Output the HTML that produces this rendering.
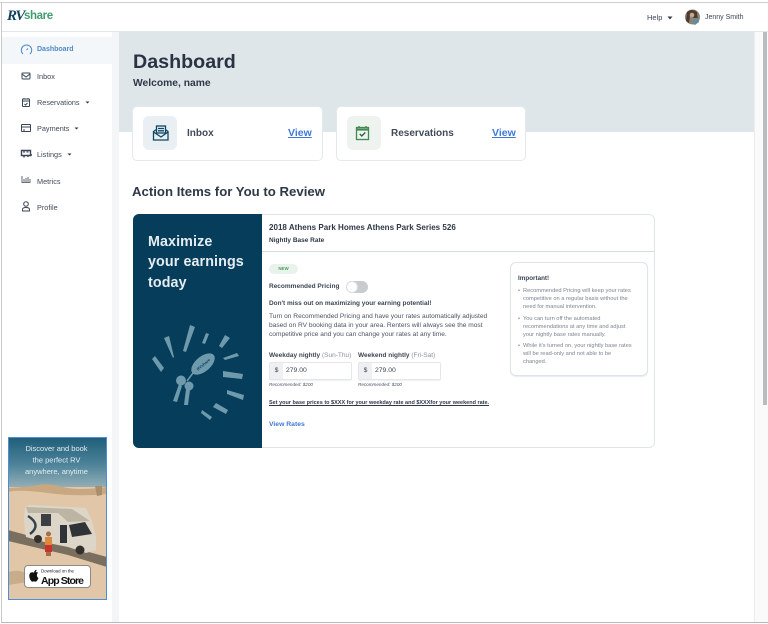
<!DOCTYPE html>
<html><head><meta charset="utf-8"><style>
*{box-sizing:border-box;margin:0;padding:0}
html,body{width:768px;height:624px;overflow:hidden;background:#fff;font-family:"Liberation Sans",sans-serif;color:#2b3444}
.a{position:absolute;white-space:nowrap}
#p{position:relative;width:768px;height:624px;overflow:hidden;filter:blur(.3px)}
.nav{font-size:7.3px;color:#3f4a5a;left:37px}
.card{position:absolute;background:#fff;border:1px solid #e3e9ed;border-radius:5px;top:106px;height:55px}
.ib{position:absolute;left:10px;top:9px;width:34px;height:34px;border-radius:6px}
.v{color:#3f78d8;font-weight:bold;font-size:10.5px;text-decoration:underline}
.t{font-size:6.6px;color:#4a5462;line-height:9.1px}
.i{font-size:5.7px;color:#7c8590;line-height:8.1px}
.inp{position:absolute;top:362px;height:18px;width:83px;border:1px solid #e4e7ea;border-radius:2px;background:#fff;box-shadow:0 1px 1px #eef0f2;font-size:6.8px;color:#3c4653;line-height:16px}
.inp b{display:inline-block;width:13px;height:16px;background:#eef0f2;text-align:center;font-weight:normal;margin-right:3px}
</style></head><body><div id="p">

<div class="a" style="left:0;top:2px;width:768px;height:1px;background:#cfcfcf"></div>
<div class="a" style="left:1px;top:3px;width:1px;height:619px;background:#c9c9c9"></div>
<div class="a" style="left:1px;top:622px;width:767px;height:1px;background:#b9b9b9"></div>

<!-- header -->
<div class="a" style="left:2px;top:31px;width:766px;height:1px;background:#e3e6e8"></div>
<div class="a" style="left:7px;top:8px;font:italic bold 15px 'Liberation Serif',serif;color:#12405f;letter-spacing:-1.4px">RV</div>
<div class="a" style="left:24px;top:9.5px;font-size:11.5px;font-weight:bold;color:#3f9e6d;letter-spacing:-.4px">share</div>
<div class="a" style="left:647px;top:13px;font-size:7.5px;color:#3c4656">Help</div>
<svg class="a" style="left:667px;top:16px" width="6" height="4"><path d="M.5 .5h5L3 3.500z" fill="#333c4a"/></svg>
<svg class="a" style="left:685px;top:9px" width="15" height="16"><circle cx="7.500" cy="8" r="7.500" fill="#8b8278"/><path d="M2 3Q7-1 12 3L13 13 9 15 8 7 5 7 4 14 1 12z" fill="#4f3b2e"/><path d="M8 9h5l1 4-4 3-2-1z" fill="#6c8a94"/><circle cx="7" cy="6" r="2.300" fill="#c8a48c"/></svg>
<div class="a" style="left:705px;top:13.500px;font-size:7px;color:#3c4656">Jenny Smith</div>

<!-- sidebar -->
<div class="a" style="left:2px;top:32px;width:110px;height:590px;background:#fff"></div>
<div class="a" style="left:112px;top:32px;width:7px;height:590px;background:#f4f5f6"></div>
<div class="a" style="left:2px;top:37px;width:110px;height:27px;background:#f4f7f9"></div>
<div class="a nav" style="top:46px;color:#4f8ac9;font-weight:bold;font-size:7px">Dashboard</div>
<div class="a nav" style="top:72px">Inbox</div>
<div class="a nav" style="top:98px">Reservations</div>
<div class="a nav" style="top:124px">Payments</div>
<div class="a nav" style="top:150px">Listings</div>
<div class="a nav" style="top:177px">Metrics</div>
<div class="a nav" style="top:203px">Profile</div>
<svg class="a" style="left:0;top:36px" width="112" height="180" fill="none" stroke="#3a4656" stroke-width="1">
<path d="M23 18a5.200 5.200 0 1 1 7 0M26.500 14l1.500-1.500" stroke="#4f8ac9"/>
<rect x="22" y="37" width="8" height="6" rx=".7"/><path d="M22 38l4 3 4-3"/>
<rect x="22.500" y="63" width="7" height="7.500" rx=".5"/><path d="M22.500 65h7M24 62v1.500M28 62v1.500M24.500 68l1 1 2-2"/>
<rect x="21.500" y="88.500" width="9" height="7" rx=".5"/><path d="M21.500 91h9M23 94h2"/>
<path d="M21.500 114.500h9v5h-9zM24 120v1.500M28 120v1M31 119h1" stroke-width="1.400"/><path d="M23 116h2M26.500 116h2"/>
<path d="M22 140v6.500h8.500M24 146v-3M26 146v-4M28 146v-5M30 146v-3" stroke-width=".8"/>
<circle cx="26" cy="168" r="2.300"/><path d="M22.500 175v-1.500q0-2 3.500-2t3.500 2v1.500z"/>
</svg>
<svg class="a" style="left:0;top:98px" width="112" height="60" fill="#2b3444"><path d="M85.500 3.500h4l-2 2zM74.500 29.500h4l-2 2zM67.500 55.500h4l-2 2z"/></svg>

<!-- ad -->
<svg class="a" style="left:8px;top:437px" width="99" height="163" viewBox="0 0 99 163">
<defs><linearGradient id="s" x1="0" y1="0" x2="0" y2="1"><stop offset="0" stop-color="#1f5d78"/><stop offset=".55" stop-color="#4d839a"/><stop offset="1" stop-color="#93aeb6"/></linearGradient></defs>
<rect width="99" height="163" fill="#e1c7a8"/>
<rect width="99" height="50" fill="url(#s)"/>
<path d="M0 51Q20 50 30 48T55 50 99 50V57Q70 60 40 56T0 55z" fill="#c9a781"/>
<path d="M87 49l7 0 0 9-5 1z" fill="#a98e6b"/>
<path d="M0 93L99 120V130L60 118 0 104z" fill="#7a6e5e"/>
<path d="M17 71Q18 68 24 68L78 71 84 84 88 100 88 113 78 116 60 110 40 106 18 100Q15 85 17 71z" fill="#ddd6c8"/>
<path d="M18 70L64 72 82 84 60 85 50 76 20 76z" fill="#bdb5a4"/>
<path d="M20 79Q34 88 22 97" stroke="#34424f" stroke-width="2.500" fill="none"/>
<rect x="33" y="77" width="10" height="12" fill="#3b3f43"/>
<path d="M61 88L77 85 84 97 64 100z" fill="#2f3338"/>
<rect x="52" y="88" width="7" height="18" fill="#2f3338"/>
<circle cx="30" cy="102" r="4" fill="#33302c"/><circle cx="72" cy="113" r="4.500" fill="#33302c"/>
<rect x="37" y="100" width="7" height="8" fill="#dc8a3a"/><rect x="37" y="108" width="7" height="7" fill="#c8342b"/><rect x="38" y="115" width="5" height="4" fill="#a56d48"/><circle cx="40.500" cy="97" r="2.500" fill="#a56d48"/>
<path d="M0 135Q10 132 18 136T20 145L0 148z" fill="#c9ad8a"/>
<rect x="16.500" y="128.500" width="66" height="22" rx="3.500" fill="#fff" stroke="#8a8a8a"/>
<path d="M30 135.500c-1-.6-3-.6-4 .2-1-.8-3-.6-4 .5-1.500 2-.5 6 1.500 8 1 .9 1.500 .2 2.500 .2s1.500 .7 2.500-.2c1-1 1.600-2.200 2-3.200-2-1-2-3.700-.5-5.500zM26 135.500c0-1.200 1-2.500 2.500-2.800 .2 1.500-1 2.800-2.500 2.800z" fill="#111"/>
<rect x=".5" y=".5" width="98" height="162" fill="none" stroke="#4c8fd6"/>
<text x="33" y="135.500" font-size="4.400" font-family="Liberation Sans" fill="#222">Download on the</text>
<text x="33" y="147" font-size="10.500" font-weight="bold" font-family="Liberation Sans" fill="#111" textLength="43">App Store</text>
<g font-family="Liberation Sans" font-size="7.500" fill="#e4edf0" text-anchor="middle"><text x="48.500" y="14">Discover and book</text><text x="48.500" y="25.500">the perfect RV</text><text x="48.500" y="37">anywhere, anytime</text></g>
</svg>

<!-- hero -->
<div class="a" style="left:119px;top:32px;width:635px;height:100px;background:#dfe6ea"></div>
<div class="a" style="left:754px;top:32px;width:14px;height:590px;background:#fafafa;border-left:1px solid #eceded"></div>
<div class="a" style="left:763px;top:32px;width:4px;height:373px;background:#b9bdc0"></div>
<div class="a" style="left:133px;top:48px;font-size:19.700px;font-weight:bold;color:#2a3344;line-height:28px">Dashboard</div>
<div class="a" style="left:133px;top:77.500px;font-size:10.300px;font-weight:bold;color:#2f3847">Welcome, name</div>

<div class="card" style="left:132px;width:191px"><div class="ib" style="background:#e9eff3"></div>
<svg class="a" style="left:19px;top:17px" width="18" height="18" fill="none" stroke="#0e4765" stroke-width="1.300"><path d="M1.500 7.500L9 2.500l7 5v8.500H1.500zM1.500 8l7.500 5 7-5"/><rect x="4.500" y="2" width="9" height="7" fill="#e9eff3"/><path d="M6 4.500h6M6 6.800h6"/></svg>
<div class="a" style="left:54px;top:21px;font-size:10px;font-weight:bold;color:#414b58">Inbox</div>
<div class="a v" style="left:155px;top:20px">View</div></div>

<div class="card" style="left:336px;width:190px"><div class="ib" style="background:#eef3ef"></div>
<svg class="a" style="left:18px;top:18px" width="16" height="16" fill="none" stroke="#3f8a50" stroke-width="1.300"><rect x="1.500" y="2.500" width="12" height="12"/><path d="M1.500 4.500h12" stroke-width="2.200"/><path d="M4 1v2M11 1v2"/><path d="M4.800 9l2 2 3.500-3.500" stroke="#2c5f3a"/></svg>
<div class="a" style="left:54px;top:21px;font-size:10px;font-weight:bold;color:#414b58">Reservations</div>
<div class="a v" style="left:155px;top:20px">View</div></div>

<div class="a" style="left:132px;top:183.500px;font-size:13.200px;font-weight:bold;color:#2f3847">Action Items for You to Review</div>

<!-- main card -->
<div class="a" style="left:133px;top:214px;width:522px;height:234px;border:1px solid #dfe5ea;border-radius:6px;background:#fff"></div>
<div class="a" style="left:133px;top:214px;width:129px;height:234px;background:#053d5b;border-radius:6px 0 0 6px"></div>
<div class="a" style="left:262px;top:251px;width:393px;height:1px;background:#d3dde4"></div>
<div class="a" style="left:148px;top:232px;font-size:14.300px;font-weight:bold;color:#e6edf0;line-height:20.300px;letter-spacing:.1px">Maximize<br>your earnings<br>today</div>
<svg class="a" style="left:140px;top:320px" width="110" height="110" fill="#6f9aac">
<path d="M43 31L50 5 55 7 46 32zM33 38L24 18 29 16 34 37zM21 52L12 39 15 36 24 48zM62 23L66 13 69 14 65 24zM79 26L85 15 90 18 82 28zM83 38L97 33 99 36 85 40zM83 51L103 54 102 59 83 57zM87 70L104 75 103 80 87 74zM76 83L88 90 86 94 73 87zM62 90L72 97 70 100 61 93z"/>
<ellipse cx="63" cy="44" rx="14" ry="7.500" transform="rotate(-40 63 44)"/>
<path d="M47 61L53 53" stroke="#6f9aac" stroke-width="1.500"/>
<circle cx="41" cy="60.500" r="5"/><circle cx="49" cy="66" r="4.500"/>
<path d="M39 64L33 81 37 82 42 66zM46 69L44 85 48 85 50 70z"/>
<text x="63" y="46" font-size="4" font-weight="bold" font-family="Liberation Sans" fill="#0d4562" text-anchor="middle" transform="rotate(-40 63 44)">RVshare</text>
</svg>

<div class="a" style="left:269px;top:222.500px;font-size:8.050px;font-weight:bold;color:#2f3847">2018 Athens Park Homes Athens Park Series 526</div>
<div class="a" style="left:269px;top:236.500px;font-size:6.500px;font-weight:bold;color:#2f3847">Nightly Base Rate</div>
<div class="a" style="left:269px;top:264px;width:29px;height:10px;border-radius:5px;background:#e9f3ec;color:#4d9a68;font-size:4.400px;font-weight:bold;text-align:center;line-height:10px">NEW</div>
<div class="a" style="left:269px;top:283px;font-size:6.500px;font-weight:bold;color:#3c4653">Recommended Pricing</div>
<div class="a" style="left:346px;top:281px;width:22px;height:12px;border-radius:6px;background:#c8cbcf"></div>
<div class="a" style="left:346px;top:281px;width:12px;height:12px;border-radius:50%;background:#fff;border:1px solid #dcdfe2"></div>
<div class="a" style="left:269px;top:300px;font-size:6.450px;font-weight:bold;color:#3c4653">Don't miss out on maximizing your earning potential!</div>
<div class="a t" style="left:269px;top:312px">Turn on Recommended Pricing and have your rates automatically adjusted<br>based on RV booking data in your area. Renters will always see the most<br>competitive price and you can change your rates at any time.</div>
<div class="a" style="left:269px;top:352px;font-size:6.500px;font-weight:bold;color:#3c4653">Weekday nightly <span style="font-weight:normal;color:#8a929c">(Sun-Thu)</span></div>
<div class="a" style="left:358px;top:352px;font-size:6.500px;font-weight:bold;color:#3c4653">Weekend nightly <span style="font-weight:normal;color:#8a929c">(Fri-Sat)</span></div>
<div class="inp" style="left:269px"><b>$</b>279.00</div>
<div class="inp" style="left:358px"><b>$</b>279.00</div>
<div class="a" style="left:269px;top:382px;font-size:4.600px;font-style:italic;color:#4a5462">Recommended: $200</div>
<div class="a" style="left:358px;top:382px;font-size:4.600px;font-style:italic;color:#4a5462">Recommended: $200</div>
<div class="a" style="left:269px;top:400px;font-size:5.500px;color:#2f3847;text-decoration:underline;font-weight:bold">Set your base prices to $XXX for your weekday rate and $XXXfor your weekend rate.</div>
<div class="a" style="left:269px;top:420.500px;font-size:6.800px;font-weight:bold;color:#3f78d8">View Rates</div>

<!-- important -->
<div class="a" style="left:510px;top:262px;width:138px;height:114px;border:1px solid #dde3e7;border-radius:6px;box-shadow:0 1px 1px #e8ecef"></div>
<div class="a" style="left:518px;top:275px;font-size:6.300px;font-weight:bold;color:#3c4653">Important!</div>
<div class="a i" style="left:518px;top:287px">•</div><div class="a i" style="left:523px;top:287px">Recommended Pricing will keep your rates<br>competitive on a regular basis without the<br>need for manual intervention.</div>
<div class="a i" style="left:518px;top:314.500px">•</div><div class="a i" style="left:523px;top:314.500px">You can turn off the automated<br>recommendations at any time and adjust<br>your nightly base rates manually.</div>
<div class="a i" style="left:518px;top:342px">•</div><div class="a i" style="left:523px;top:342px">While it's turned on, your nightly base rates<br>will be read-only and not able to be<br>changed.</div>

</div></body></html>
